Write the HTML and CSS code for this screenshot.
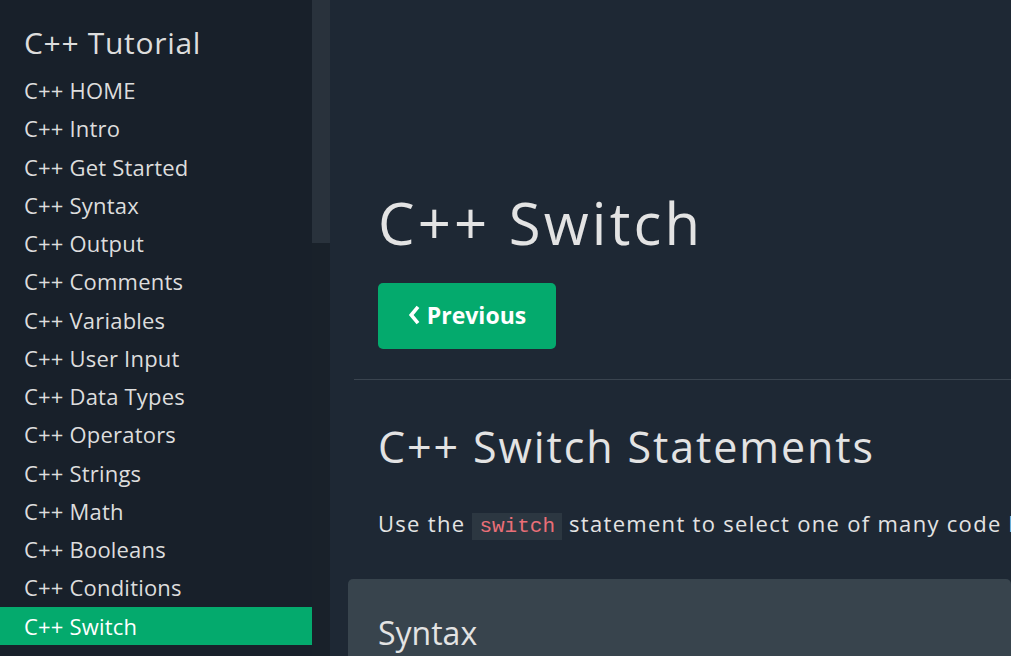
FILE: index.html
```html
<!DOCTYPE html>
<html lang="en">
<head>
<meta charset="utf-8">
<title>C++ Switch</title>
<link rel="stylesheet" href="styles.css">
</head>
<body>
<div class="page">
  <nav class="sidebar">
    <h2 class="side-title">C++ Tutorial</h2>
    <ul class="menu">
      <li><a href="#">C++ HOME</a></li>
      <li><a href="#">C++ Intro</a></li>
      <li><a href="#">C++ Get Started</a></li>
      <li><a href="#">C++ Syntax</a></li>
      <li><a href="#">C++ Output</a></li>
      <li><a href="#">C++ Comments</a></li>
      <li><a href="#">C++ Variables</a></li>
      <li><a href="#">C++ User Input</a></li>
      <li><a href="#">C++ Data Types</a></li>
      <li><a href="#">C++ Operators</a></li>
      <li><a href="#">C++ Strings</a></li>
      <li><a href="#">C++ Math</a></li>
      <li><a href="#">C++ Booleans</a></li>
      <li><a href="#">C++ Conditions</a></li>
      <li><a href="#" class="active">C++ Switch</a></li>
      <li><a href="#">C++ While Loop</a></li>
    </ul>
  </nav>
  <div class="scrollbar"><div class="thumb"></div></div>
  <main class="main">
    <h1 class="title">C++ Switch</h1>
    <a href="#" class="btn-prev"><svg class="chev" viewBox="0 0 12 20" width="12" height="20"><path d="M10 1.8 L3.2 10 L10 18.2" fill="none" stroke="#fff" stroke-width="3.6" stroke-linecap="butt" stroke-linejoin="miter"/></svg><span>Previous</span></a>
    <hr class="rule">
    <h2 class="section-title">C++ Switch Statements</h2>
    <p class="intro">Use the <code class="codespan">switch</code> statement to select one of many code blocks to be executed.</p>
    <div class="example">
      <h3 class="example-title">Syntax</h3>
    </div>
  </main>
</div>
</body>
</html>
```
FILE: styles.css
```css
* { box-sizing: border-box; }
html, body { margin: 0; padding: 0; }
body {
  background: #1e2834;
  font-family: "Open Sans", "Noto Sans", sans-serif;
  color: #dddddd;
  overflow: hidden;
}
.page {
  display: flex;
  height: 656px;
  overflow: hidden;
}
.sidebar {
  width: 312px;
  flex: 0 0 312px;
  background: #18202a;
  padding-top: 25px;
  overflow: hidden;
}
.side-title {
  margin: 0 0 10px 24px;
  font-size: 30px;
  line-height: 36px;
  font-weight: 400;
  letter-spacing: 0.7px;
  color: #dddddd;
}
.menu {
  list-style: none;
  margin: 0;
  padding: 0;
}
.menu a {
  display: block;
  padding: 0 24px;
  font-size: 22px;
  line-height: 38.25px;
  letter-spacing: 0.2px;
  color: #dddddd;
  text-decoration: none;
  white-space: nowrap;
}
.menu a.active {
  background: #04aa6d;
  color: #ffffff;
}
.scrollbar {
  width: 18px;
  flex: 0 0 18px;
  background: #19212a;
}
.thumb {
  height: 243px;
  background: #29323c;
}
.main {
  flex: 1;
  min-width: 0;
  padding: 188px 0 0 24px;
  overflow: hidden;
}
.title {
  margin: 0 0 0 24px;
  font-size: 58px;
  line-height: 69.6px;
  font-weight: 400;
  letter-spacing: 3.2px;
  color: #e3e3e3;
  white-space: nowrap;
}
.btn-prev {
  margin: 25px 0 0 24px;
  display: inline-flex;
  align-items: center;
  justify-content: center;
  gap: 7px;
  width: 178px;
  height: 66px;
  background: #04aa6d;
  border-radius: 5px;
  color: #ffffff;
  text-decoration: none;
  font-size: 23px;
  font-weight: 700;
  padding-bottom: 2px;
}
.chev { display: block; }
.rule {
  margin: 30px 0 0 0;
  border: 0;
  height: 1px;
  background: #3a444f;
}
.section-title {
  margin: 41px 0 0 24px;
  font-size: 43px;
  line-height: 51.6px;
  font-weight: 400;
  letter-spacing: 1.9px;
  color: #e3e3e3;
  white-space: nowrap;
}
.intro {
  margin: 35px 0 0 24px;
  font-size: 22px;
  line-height: 33px;
  letter-spacing: 1.3px;
  white-space: nowrap;
  color: #e3e3e3;
}
.codespan {
  font-family: "Liberation Mono", "DejaVu Sans Mono", monospace;
  font-size: 21px;
  letter-spacing: 0;
  color: #ea6f78;
  background: #2c3741;
  padding: 2px 7px;
}
.example {
  margin: 36px 0 0 -6px;
  background: #38444d;
  border-radius: 5px;
  padding: 35px 30px 30px;
  height: 120px;
}
.example-title {
  margin: 0;
  font-size: 32px;
  line-height: 38.4px;
  font-weight: 400;
  color: #e3e3e3;
}
```
